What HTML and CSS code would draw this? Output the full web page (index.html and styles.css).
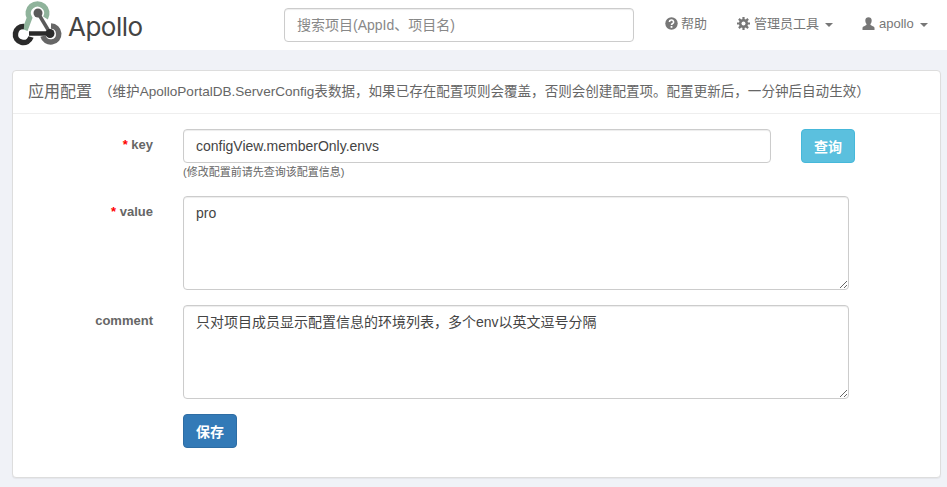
FILE: index.html
```html
<!DOCTYPE html>
<html lang="zh">
<head>
<meta charset="utf-8">
<title>Apollo</title>
<link rel="stylesheet" href="styles.css">
</head>
<body>
<nav class="navbar">
  <a class="brand">
    <svg class="logo" width="54" height="50" viewBox="10 0 54 50" fill="none">
      <path d="M25 30 L29.500 18 A9.300 9.300 0 1 1 45.500 18" stroke="#8fb39b" stroke-width="5.500"/>
      <path d="M38 13 L50 33" stroke="#5a5a5a" stroke-width="3.500"/>
      <path d="M29 33.500 H50" stroke="#2b2b2b" stroke-width="4.500"/>
      <path d="M24 26.500 A8 8 0 1 0 31 37" stroke="#2b2b2b" stroke-width="5.500"/>
      <path d="M51 26 A8 8 0 1 1 43 36" stroke="#666" stroke-width="5.500"/>
      <circle cx="38" cy="13" r="4.500" fill="#5a5a5a"/>
      <circle cx="50" cy="33.500" r="4.500" fill="#2b2b2b"/>
    </svg>
    <span class="brand-name">Apollo</span>
  </a>
  <input class="search" type="text" placeholder="搜索项目(AppId、项目名)">
  <ul class="nav-links">
    <li class="nav-item nav-help">
      <svg class="icon" width="13" height="13" viewBox="0 0 13 13"><circle cx="6.500" cy="6.500" r="6.200" fill="#777"/><path d="M4.400 5a2.100 2 0 1 1 3 1.800c-.7.4-.9.7-.9 1.300" stroke="#fff" stroke-width="1.600" fill="none"/><rect x="5.600" y="9" width="1.800" height="1.800" fill="#fff"/></svg>
      <span>帮助</span>
    </li>
    <li class="nav-item nav-admin">
      <svg class="icon" width="13" height="13" viewBox="0 0 13 13"><circle cx="6.500" cy="6.500" r="3.400" fill="none" stroke="#777" stroke-width="2.400"/><path d="M6.500 0v13M0 6.500h13M1.900 1.900l9.200 9.200M11.100 1.900l-9.200 9.200" stroke="#777" stroke-width="2.200"/><circle cx="6.500" cy="6.500" r="2" fill="#fff"/></svg>
      <span>管理员工具</span><i class="caret"></i>
    </li>
    <li class="nav-item nav-user">
      <svg class="icon" width="13" height="13" viewBox="0 0 13 13"><path d="M0.500 13v-2.300c0-1 3.200-2 3.900-2.600.3-.4.2-1-.2-1.500C3.600 5.800 3.300 4.800 3.300 3.500 3.300 1.400 4.700.3 6.500.3s3.200 1.100 3.200 3.200c0 1.300-.3 2.300-.9 3.100-.4.500-.5 1.100-.2 1.500.7.600 3.900 1.600 3.900 2.600V13z" fill="#777"/></svg>
      <span>apollo</span><i class="caret"></i>
    </li>
  </ul>
</nav>
<main class="page">
  <section class="panel">
    <header class="panel-heading">
      <span class="panel-title">应用配置</span>
      <small class="panel-note">（维护ApolloPortalDB.ServerConfig表数据，如果已存在配置项则会覆盖，否则会创建配置项。配置更新后，一分钟后自动生效）</small>
    </header>
    <form class="panel-body">
      <div class="row row-key">
        <label class="label"><span class="req">*</span> key</label>
        <div class="field field-key">
          <input class="control" type="text" value="configView.memberOnly.envs">
          <small class="help">(修改配置前请先查询该配置信息)</small>
        </div>
        <button class="btn btn-info" type="button">查询</button>
      </div>
      <div class="row row-value">
        <label class="label"><span class="req">*</span> value</label>
        <textarea class="control area">pro</textarea>
      </div>
      <div class="row row-comment">
        <label class="label">comment</label>
        <textarea class="control area">只对项目成员显示配置信息的环境列表，多个env以英文逗号分隔</textarea>
      </div>
      <div class="row row-save">
        <button class="btn btn-primary" type="button">保存</button>
      </div>
    </form>
  </section>
</main>
</body>
</html>
```
FILE: styles.css
```css
* { box-sizing: border-box; }
html, body { margin: 0; height: 100%; }
body {
  background: #f0f2f7;
  color: #333;
  font-family: "Liberation Sans", "Noto Sans CJK SC", sans-serif;
  font-size: 13px;
  line-height: 1.43;
  overflow: hidden;
}
.navbar {
  height: 50px;
  background: #fff;
  display: flex;
  align-items: center;
  position: relative;
}
.brand { display: flex; align-items: center; margin-left: 10px; width: 274px; }
.logo { flex: none; }
.brand-name { font-family: "Inter", sans-serif; font-size: 26px; font-weight: 400; letter-spacing: -.5px; color: #444; margin-left: 4px; margin-top: 4px; }
.search {
  width: 350px;
  height: 34px;
  margin-top: -1px;
  padding: 6px 12px;
  border: 1px solid #ccc;
  border-radius: 4px;
  font: 14px "Liberation Sans", "Noto Sans CJK SC", sans-serif;
  color: #555;
  box-shadow: inset 0 1px 1px rgba(0,0,0,.075);
}
.search::placeholder { color: #888; opacity: 1; }
.nav-links { list-style: none; display: flex; margin: -2px 0 0 0; padding: 0; color: #777; }
.nav-item { display: flex; align-items: center; white-space: nowrap; }
.nav-help { margin-left: 31px; }
.nav-admin { margin-left: 30px; }
.nav-user { margin-left: 29px; }
.icon { flex: none; margin-right: 4px; }
.nav-help .icon { margin-right: 3px; }
.caret {
  width: 0; height: 0;
  margin-left: 6px;
  margin-top: 2px;
  border-top: 4px solid #777;
  border-left: 4px solid transparent;
  border-right: 4px solid transparent;
}
.page { padding: 20px 6px 0 12px; }
.panel {
  height: 408px;
  background: #fff;
  border: 1px solid #ddd;
  border-radius: 4px;
  box-shadow: 0 1px 1px rgba(0,0,0,.05);
}
.panel-heading {
  height: 43px;
  padding: 0 15px;
  display: flex;
  align-items: center;
  border-bottom: 1px solid #eee;
  white-space: nowrap;
  color: #666;
}
.panel-title { font-size: 16px; }
.panel-note { font-size: 13.55px; margin-left: 7px; color: #666; }
.panel-body { padding-top: 15px; }
.row { display: flex; align-items: flex-start; }
.label {
  width: 140px;
  text-align: right;
  font-weight: 700;
  font-size: 13px;
  color: #666;
  padding-top: 7px;
  flex: none;
}
.req { color: #f00; }
.field { width: 588px; margin-left: 30px; }
.control {
  display: block;
  border: 1px solid #ccc;
  border-radius: 4px;
  font: 14px/20px "Liberation Sans", "Noto Sans CJK SC", sans-serif;
  color: #444;
  padding: 6px 12px;
  background: #fff;
  box-shadow: inset 0 1px 1px rgba(0,0,0,.075);
}
.field .control { width: 100%; height: 34px; }
.help { display: block; font-size: 11px; line-height: 14px; margin-top: 2px; color: #666; }
.area { width: 666px; height: 94px; margin-left: 30px; resize: vertical; }
.btn {
  width: 54px;
  height: 34px;
  border-radius: 4px;
  border: 1px solid;
  color: #fff;
  font: 700 14px "Liberation Sans", "Noto Sans CJK SC", sans-serif;
  padding: 0;
}
.btn-info { background: #5bc0de; border-color: #46b8da; margin-left: 30px; }
.btn-primary { background: #337ab7; border-color: #2e6da4; margin-left: 170px; }
.row-value { margin-top: 17px; }
.row-comment { margin-top: 15px; }
.row-save { margin-top: 15px; }
```
